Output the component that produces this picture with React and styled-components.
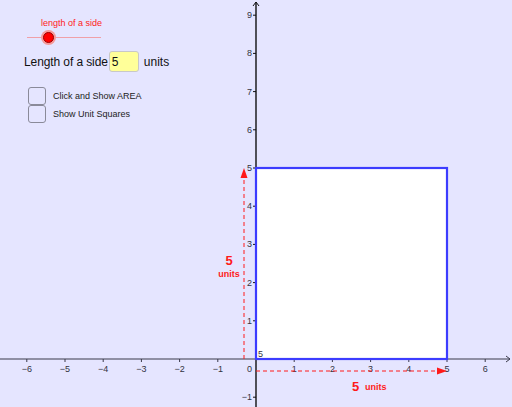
import React, { useState } from 'react'
import styled, { createGlobalStyle } from 'styled-components'

const GlobalStyle = createGlobalStyle`
    html, body {
        margin: 0;
        padding: 0;
    }
    body {
        font-family: "Liberation Sans", Arial, sans-serif;
        background: #e5e5ff;
    }
`

// graph coordinates
const O = { x: 256, y: 359 }
const U = 38.2
const px = (v) => O.x + v * U
const py = (v) => O.y - v * U

function Graph() {
    const xTicks = [-6, -5, -4, -3, -2, -1, 1, 2, 3, 4, 5, 6]
    const yTicks = [-1, 1, 2, 3, 4, 5, 6, 7, 8, 9]
    return (
        <Canvas viewBox="0 0 512 407" width="512" height="407">
            {/* square */}
            <rect x={px(0)} y={py(5)} width={5 * U} height={5 * U} fill="#ffffff" />

            {/* axes */}
            <line x1="0" y1={O.y} x2="510" y2={O.y} stroke="#3a3a4a" strokeWidth="1.2" />
            <polyline points={`506,${O.y - 3} 510,${O.y} 506,${O.y + 3}`} fill="none" stroke="#3a3a4a" strokeWidth="1" />
            <line x1={O.x} y1="2" x2={O.x} y2="407" stroke="#111" strokeWidth="1.4" />
            <polyline points={`${O.x - 3},6 ${O.x},2 ${O.x + 3},6`} fill="none" stroke="#111" strokeWidth="1" />

            {xTicks.map((t) => (
                <g key={'x' + t}>
                    <line x1={px(t)} y1={O.y} x2={px(t)} y2={O.y + 3} stroke="#3a3a4a" strokeWidth="1" />
                    <AxisLabel x={px(t)} y={O.y + 13} textAnchor="middle">
                        {t < 0 ? '\u2212' + -t : t}
                    </AxisLabel>
                </g>
            ))}
            {yTicks.map((t) => (
                <g key={'y' + t}>
                    <line x1={O.x - 3} y1={py(t)} x2={O.x} y2={py(t)} stroke="#111" strokeWidth="1" />
                    <AxisLabel x={O.x - 4} y={py(t) + 3} textAnchor="end">
                        {t < 0 ? '\u2212' + -t : t}
                    </AxisLabel>
                </g>
            ))}
            <AxisLabel x={O.x - 4} y={O.y + 13} textAnchor="end">0</AxisLabel>

            {/* square outline */}
            <rect
                x={px(0)}
                y={py(5)}
                width={5 * U}
                height={5 * U}
                fill="none"
                stroke="#3c3cff"
                strokeWidth="2.2"
            />
            <AxisLabel x={O.x + 2} y={O.y - 2} fontSize="8">5</AxisLabel>

            {/* vertical dimension */}
            <line x1="244" y1={O.y} x2="244" y2={py(5) + 9} stroke="#ff1a1a" strokeWidth="1" strokeDasharray="4 3" />
            <polygon points={`244,${py(5)} 240.5,${py(5) + 10} 247.5,${py(5) + 10}`} fill="#ff1a1a" />
            <RedNum x="229" y="265" textAnchor="middle">5</RedNum>
            <RedUnit x="229" y="277" textAnchor="middle">units</RedUnit>

            {/* horizontal dimension */}
            <line x1={O.x} y1="371" x2={px(5) - 9} y2="371" stroke="#ff1a1a" strokeWidth="1" strokeDasharray="4 3" />
            <polygon points={`${px(5)},371 ${px(5) - 10},367.5 ${px(5) - 10},374.5`} fill="#ff1a1a" />
            <RedNum x="352" y="391">5</RedNum>
            <RedUnit x="365" y="390">units</RedUnit>
        </Canvas>
    )
}

function App() {
    const [side] = useState(5)
    const [showArea, setShowArea] = useState(false)
    const [showSquares, setShowSquares] = useState(false)

    return (
        <Page>
            <GlobalStyle />
            <Graph />
            <Controls>
                <Slider>
                    <SliderLabel>length of a side</SliderLabel>
                    <Track>
                        <Knob />
                    </Track>
                </Slider>
                <InputRow>
                    <span>Length of a side</span>
                    <Field>{side}</Field>
                    <span>units</span>
                </InputRow>
                <Checks>
                    <CheckRow onClick={() => setShowArea(!showArea)}>
                        <Box $checked={showArea} />
                        <span>Click and Show AREA</span>
                    </CheckRow>
                    <CheckRow onClick={() => setShowSquares(!showSquares)}>
                        <Box $checked={showSquares} />
                        <span>Show Unit Squares</span>
                    </CheckRow>
                </Checks>
            </Controls>
        </Page>
    )
}

export default App

const Page = styled.div`
    position: relative;
    width: 512px;
    height: 407px;
    overflow: hidden;
    background: #e5e5ff;
`

const Canvas = styled.svg`
    position: absolute;
    left: 0;
    top: 0;
    display: block;
`

const AxisLabel = styled.text`
    font-family: "Liberation Sans", Arial, sans-serif;
    font-size: 9px;
    fill: #333340;
`

const RedNum = styled.text`
    font-family: "Liberation Sans", Arial, sans-serif;
    font-size: 13px;
    font-weight: bold;
    fill: #ff1a1a;
`

const RedUnit = styled.text`
    font-family: "Liberation Sans", Arial, sans-serif;
    font-size: 9px;
    font-weight: bold;
    fill: #ff1a1a;
`

const Controls = styled.div`
    position: absolute;
    left: 0;
    top: 0;
    padding: 17px 0 0 24px;
    display: flex;
    flex-direction: column;
`

const Slider = styled.div`
    display: flex;
    flex-direction: column;
    align-items: flex-start;
    margin-left: 3px;
`

const SliderLabel = styled.div`
    font-size: 9px;
    color: #ff1a1a;
    margin-left: 14px;
    line-height: 12px;
`

const Track = styled.div`
    position: relative;
    width: 74px;
    height: 1px;
    margin-top: 8px;
    background: #f0a0a8;
`

const Knob = styled.div`
    position: absolute;
    left: 16px;
    top: -5px;
    width: 9px;
    height: 9px;
    border-radius: 50%;
    background: #ff0000;
    border: 1px solid #990000;
    box-shadow: 0 0 0 2px #f59a9a;
`

const InputRow = styled.div`
    display: flex;
    align-items: center;
    gap: 1px;
    margin-top: 13px;
    font-size: 12px;
    color: #111;

    span:first-child {
        letter-spacing: -0.1px;
    }

    span:last-child {
        margin-left: 4px;
    }
`

const Field = styled.div`
    width: 26px;
    height: 19px;
    padding-left: 2px;
    box-sizing: content-box;
    background: #ffff99;
    border: 1px solid #c8c8c8;
    border-radius: 3px;
    display: flex;
    align-items: center;
    font-size: 12px;
`

const Checks = styled.div`
    display: flex;
    flex-direction: column;
    margin-top: 15px;
    margin-left: 4px;
`

const CheckRow = styled.div`
    display: flex;
    align-items: center;
    gap: 7px;
    font-size: 9px;
    color: #222;
    cursor: pointer;
    height: 18px;
`

const Box = styled.div`
    width: 18px;
    height: 18px;
    box-sizing: border-box;
    border: 1px solid #8a8a99;
    border-radius: 3px;
    background: ${(p) => (p.$checked ? '#7d7dff' : 'transparent')};
`
